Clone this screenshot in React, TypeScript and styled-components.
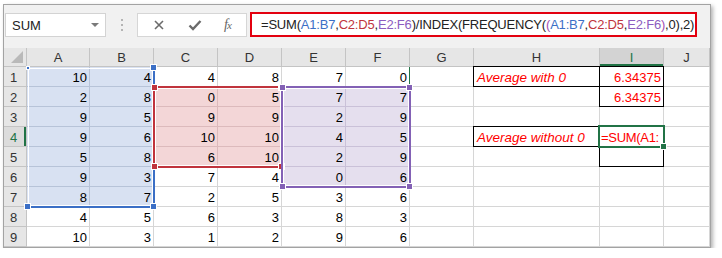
import React from "react";
import styled, { createGlobalStyle, css } from "styled-components";

const GlobalStyle = createGlobalStyle`
  html, body {
    margin: 0;
    padding: 0;
    background: #fff;
  }
  body {
    font-family: "Liberation Sans", Arial, sans-serif;
  }
`;

type Fill = "blue" | "red" | "purple";

const FILLS: Record<Fill, { bg: string; line: string; edge: string }> = {
  blue: { bg: "#d8e1f2", line: "#b7c3d8", edge: "#3b6fc6" },
  red: { bg: "#f3d6d7", line: "#dcbabc", edge: "#c0343d" },
  purple: { bg: "#e5dfee", line: "#cac1d8", edge: "#8361b5" },
};

const COL_NAMES = ["A", "B", "C", "D", "E", "F", "G", "H", "I", "J"];
const COL_WIDTHS = [63, 64, 64, 64, 64, 64, 64, 126, 64, 46];
// gridline x of the left edge of each column (plus final edge), in grid coords
const EDGES = [22, 85, 149, 213, 277, 341, 405, 469, 595, 659, 705];
// gridline y of the bottom of header and each row
const ROW_LINES = [18, 38, 58, 78, 98, 118, 138, 158, 178, 198];

const Window = styled.div`
  margin: 4px 0 0 3px;
  width: 706px;
  border: 1px solid #a3a3a3;
  background: #fff;
  box-shadow: 2px 2px 4px rgba(0, 0, 0, 0.3);
`;

const Toolbar = styled.div`
  height: 43px;
  background: #f1f1f1;
  display: flex;
  align-items: flex-start;
  padding: 8px 0 0 1px;
  box-sizing: border-box;
`;

const NameBox = styled.div`
  width: 101px;
  height: 24px;
  box-sizing: border-box;
  border: 1px solid #d3d3d3;
  background: #fff;
  display: flex;
  align-items: center;
  justify-content: space-between;
  padding: 0 6px 0 6px;
  font-size: 13px;
  color: #222;
`;

const DropArrow = styled.span`
  width: 0;
  height: 0;
  border-left: 4px solid transparent;
  border-right: 4px solid transparent;
  border-top: 4px solid #7a7a7a;
`;

const Grip = styled.div`
  width: 31px;
  height: 24px;
  display: flex;
  flex-direction: column;
  align-items: center;
  justify-content: center;
  gap: 3px;
`;

const GripDot = styled.span`
  width: 2px;
  height: 2px;
  background: #b4b4b4;
`;

const ButtonBox = styled.div`
  width: 110px;
  height: 24px;
  box-sizing: border-box;
  border: 1px solid #d6d6d6;
  background: #fff;
  display: flex;
  align-items: center;
  justify-content: space-around;
  padding: 0 4px;
  color: #6b6b6b;
`;

const FxLabel = styled.span`
  font-family: "Liberation Serif", "Times New Roman", serif;
  font-style: italic;
  font-size: 14px;
  color: #666;
  letter-spacing: -1px;

  small {
    font-size: 11px;
  }
`;

const FormulaBox = styled.div`
  margin-left: 3px;
  width: 447px;
  height: 25px;
  margin-top: -1px;
  box-sizing: border-box;
  border: 2px solid #e3000f;
  background: #fff;
  display: flex;
  align-items: center;
  padding-left: 9px;
  font-size: 13px;
  letter-spacing: -0.2px;
  color: #222;
  white-space: nowrap;
`;

const Ref = styled.span<{ $c: string }>`
  color: ${(p) => p.$c};
`;

const GridWrap = styled.div`
  position: relative;
  display: grid;
  grid-template-columns: 23px ${COL_WIDTHS.map((w) => `${w}px`).join(" ")};
  grid-template-rows: 19px;
  grid-auto-rows: 20px;
  font-size: 13px;
`;

const Corner = styled.div`
  position: relative;
  background: #e6e6e6;
  border-right: 1px solid #c4c4c4;
  border-bottom: 1px solid #c4c4c4;

  &::after {
    content: "";
    position: absolute;
    right: 3px;
    bottom: 3px;
    width: 0;
    height: 0;
    border-left: 12px solid transparent;
    border-bottom: 12px solid #b9b9b9;
  }
`;

const ColHead = styled.div<{ $active?: boolean }>`
  background: ${(p) => (p.$active ? "#d3d3d3" : "#e6e6e6")};
  border-right: 1px solid #c4c4c4;
  border-bottom: 1px solid #c4c4c4;
  display: flex;
  align-items: center;
  justify-content: center;
  color: ${(p) => (p.$active ? "#217346" : "#333")};
  ${(p) =>
    p.$active &&
    css`
      box-shadow: inset 0 -2px 0 #217346;
    `}
`;

const RowHead = styled.div<{ $active?: boolean }>`
  background: ${(p) => (p.$active ? "#dcdcdc" : "#e6e6e6")};
  border-right: 1px solid #c4c4c4;
  border-bottom: 1px solid #c4c4c4;
  display: flex;
  align-items: center;
  justify-content: flex-start;
  padding-left: 6px;
  padding-top: 1px;
  color: ${(p) => (p.$active ? "#217346" : "#333")};
  ${(p) =>
    p.$active &&
    css`
      box-shadow: inset -2px 0 0 #217346;
    `}
`;

const Cell = styled.div<{
  $fill?: Fill;
  $align: "left" | "right";
  $red?: boolean;
  $italic?: boolean;
  $boxed?: boolean;
  $active?: boolean;
  $greenRight?: boolean;
}>`
  position: relative;
  background: ${(p) => (p.$fill ? FILLS[p.$fill].bg : "#fff")};
  border-right: 1px solid
    ${(p) =>
      p.$greenRight ? "#217346" : p.$fill ? FILLS[p.$fill].line : "#d6d6d6"};
  border-bottom: 1px solid ${(p) => (p.$fill ? FILLS[p.$fill].line : "#d6d6d6")};
  text-align: ${(p) => p.$align};
  color: ${(p) => (p.$red ? "#ff0000" : "#000")};
  font-style: ${(p) => (p.$italic ? "italic" : "normal")};
  font-size: ${(p) => (p.$italic ? "13.5px" : "13px")};
  line-height: 19px;
  padding: ${(p) => (p.$active ? "1px 0 0 1px" : "1px 2px 0 3px")};
  letter-spacing: ${(p) => (p.$active ? "-0.3px" : "0")};
  white-space: nowrap;

  ${(p) =>
    p.$boxed &&
    css`
      &::after {
        content: "";
        position: absolute;
        top: -1px;
        left: -1px;
        right: -1px;
        bottom: -1px;
        border: 1px solid #000;
        pointer-events: none;
        z-index: 1;
      }
    `}

  ${(p) =>
    p.$active &&
    css`
      &::after {
        content: "";
        position: absolute;
        top: -2px;
        left: -2px;
        right: -2px;
        bottom: -2px;
        border: 2px solid #217346;
        pointer-events: none;
        z-index: 2;
      }
    `}
`;

const FillHandle = styled.span`
  position: absolute;
  right: -4px;
  bottom: -4px;
  width: 5px;
  height: 5px;
  background: #217346;
  border: 1px solid #fff;
  z-index: 3;
`;

const RangeBox = styled.div<{ $fill: Fill; $openStart?: boolean }>`
  position: absolute;
  box-sizing: border-box;
  border: 2px solid ${(p) => FILLS[p.$fill].edge};
  box-shadow: inset 0 0 0 1px #fff;
  pointer-events: none;
  z-index: 4;
  ${(p) =>
    p.$openStart &&
    css`
      border-top-color: transparent;
      border-left-color: transparent;
    `}
`;

type CornerPos = "tl" | "tr" | "bl" | "br";

const Handle = styled.span<{ $fill: Fill; $at: CornerPos; $tiny?: boolean }>`
  position: absolute;
  width: ${(p) => (p.$tiny ? 2 : 5)}px;
  height: ${(p) => (p.$tiny ? 2 : 5)}px;
  background: ${(p) => FILLS[p.$fill].edge};
  border: 1px solid #fff;
  ${(p) => (p.$at[0] === "t" ? "top" : "bottom")}: ${(p) => (p.$tiny ? -2 : -4)}px;
  ${(p) => (p.$at[1] === "l" ? "left" : "right")}: ${(p) => (p.$tiny ? -2 : -4)}px;
`;

const RANGES: {
  fill: Fill;
  c1: number;
  c2: number;
  r1: number;
  r2: number;
  openStart?: boolean;
}[] = [
  { fill: "blue", c1: 0, c2: 1, r1: 1, r2: 7, openStart: true },
  { fill: "red", c1: 2, c2: 3, r1: 2, r2: 5 },
  { fill: "purple", c1: 4, c2: 5, r1: 2, r2: 6 },
];

const DATA: (string | number)[][] = [
  [10, 4, 4, 8, 7, 0, "", "Average with 0", "6.34375", ""],
  [2, 8, 0, 5, 7, 7, "", "", "6.34375", ""],
  [9, 5, 9, 9, 2, 9, "", "", "", ""],
  [9, 6, 10, 10, 4, 5, "", "Average without 0", "=SUM(A1:", ""],
  [5, 8, 6, 10, 2, 9, "", "", "", ""],
  [9, 3, 7, 4, 0, 6, "", "", "", ""],
  [8, 7, 2, 5, 3, 6, "", "", "", ""],
  [4, 5, 6, 3, 8, 3, "", "", "", ""],
  [10, 3, 1, 2, 9, 6, "", "", "", ""],
];

const BOXED = new Set(["7-1", "8-1", "8-2", "7-4", "8-5"]);

function fillFor(col: number, row: number): Fill | undefined {
  for (const r of RANGES) {
    if (col >= r.c1 && col <= r.c2 && row >= r.r1 && row <= r.r2) return r.fill;
  }
  return undefined;
}

const BLUE = FILLS.blue.edge;
const RED = FILLS.red.edge;
const PURPLE = "#8c5cc0";
const PAREN = "#a24fb3";

const CrossIcon = () => (
  <svg width="12" height="12" viewBox="0 0 12 12">
    <path d="M2 2 L10 10 M10 2 L2 10" stroke="#6b6b6b" strokeWidth="1.6" fill="none" />
  </svg>
);

const CheckIcon = () => (
  <svg width="14" height="12" viewBox="0 0 14 12">
    <path d="M1.5 6.5 L5 10 L12.5 2" stroke="#6b6b6b" strokeWidth="2.4" fill="none" />
  </svg>
);

export default function App() {
  return (
    <>
      <GlobalStyle />
      <Window>
        <Toolbar>
          <NameBox>
            <span>SUM</span>
            <DropArrow />
          </NameBox>
          <Grip>
            <GripDot />
            <GripDot />
            <GripDot />
          </Grip>
          <ButtonBox>
            <CrossIcon />
            <CheckIcon />
            <FxLabel>
              f<small>x</small>
            </FxLabel>
          </ButtonBox>
          <FormulaBox>
            =SUM(<Ref $c={BLUE}>A1:B7</Ref>,<Ref $c={RED}>C2:D5</Ref>,
            <Ref $c={PURPLE}>E2:F6</Ref>)/INDEX(FREQUENCY(
            <Ref $c={PAREN}>(</Ref>
            <Ref $c={BLUE}>A1:B7</Ref>,<Ref $c={RED}>C2:D5</Ref>,
            <Ref $c={PURPLE}>E2:F6</Ref>
            <Ref $c={PAREN}>)</Ref>,0),2)
          </FormulaBox>
        </Toolbar>

        <GridWrap>
          <Corner />
          {COL_NAMES.map((n) => (
            <ColHead key={n} $active={n === "I"}>
              {n}
            </ColHead>
          ))}
          {DATA.map((row, ri) => (
            <React.Fragment key={ri}>
              <RowHead $active={ri === 3}>{ri + 1}</RowHead>
              {row.map((v, ci) => {
                const key = `${ci}-${ri + 1}`;
                const isText = typeof v === "string" && isNaN(Number(v));
                const active = key === "8-4";
                return (
                  <Cell
                    key={ci}
                    $fill={fillFor(ci, ri + 1)}
                    $align={isText ? "left" : "right"}
                    $red={ci >= 7}
                    $italic={ci === 7}
                    $boxed={BOXED.has(key)}
                    $active={active}
                    $greenRight={key === "5-1"}
                  >
                    {v}
                    {active && <FillHandle />}
                  </Cell>
                );
              })}
            </React.Fragment>
          ))}

          {RANGES.map((r) => {
            const left = EDGES[r.c1];
            const top = ROW_LINES[r.r1 - 1];
            const width = EDGES[r.c2 + 1] - left + 2;
            const height = ROW_LINES[r.r2] - top + 2;
            return (
              <RangeBox
                key={r.fill}
                $fill={r.fill}
                $openStart={r.openStart}
                style={{ left, top, width, height }}
              >
                <Handle $fill={r.fill} $at="tl" $tiny={r.openStart} />
                <Handle $fill={r.fill} $at="tr" />
                <Handle $fill={r.fill} $at="bl" />
                <Handle $fill={r.fill} $at="br" />
              </RangeBox>
            );
          })}
        </GridWrap>
      </Window>
    </>
  );
}
